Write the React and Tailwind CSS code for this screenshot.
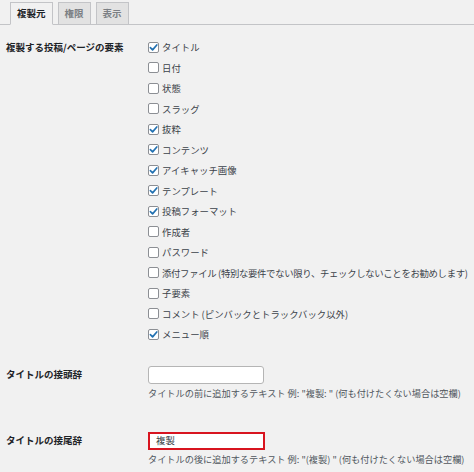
import React from 'react';

const FONT = { fontFamily: '"Noto Sans CJK JP", "Noto Sans", sans-serif' };

const ELEMENTS = [
  { label: 'タイトル', checked: true },
  { label: '日付', checked: false },
  { label: '状態', checked: false },
  { label: 'スラッグ', checked: false },
  { label: '抜粋', checked: true },
  { label: 'コンテンツ', checked: true },
  { label: 'アイキャッチ画像', checked: true },
  { label: 'テンプレート', checked: true },
  { label: '投稿フォーマット', checked: true },
  { label: '作成者', checked: false },
  { label: 'パスワード', checked: false },
  { label: '添付ファイル (特別な要件でない限り、チェックしないことをお勧めします)', checked: false, tight: true },
  { label: '子要素', checked: false },
  { label: 'コメント (ピンバックとトラックバック以外)', checked: false },
  { label: 'メニュー順', checked: true },
];

function Checkbox({ checked }) {
  return (
    <span className="relative flex h-[11px] w-[11px] shrink-0 items-center justify-center rounded-[2px] border border-[#8c8f94] bg-white">
      {checked && (
        <svg viewBox="0 0 12 12" className="absolute h-[11px] w-[11px]">
          <path d="M2.6 6.2 L5 8.6 L9.6 3.2" fill="none" stroke="#2271b1" strokeWidth="1.8" strokeLinecap="round" strokeLinejoin="round" />
        </svg>
      )}
    </span>
  );
}

function Tab({ label, active }) {
  return (
    <div
      className={`flex h-[23px] items-center border border-[#c3c4c7] px-[6px] text-[9.5px] font-bold ${
        active ? 'border-b-[#f1f1f1] bg-[#f1f1f1] text-[#1d2327]' : 'bg-[#e2e2e2] text-[#7b7f84]'
      }`}
    >
      {label}
    </div>
  );
}

export default function App() {
  return (
    <div className="h-[472px] w-[474px] overflow-hidden bg-[#f1f1f1] text-[#2c3338]" style={FONT}>
      {/* tabs */}
      <div className="flex h-[25px] items-end gap-[5px] border-b border-[#c3c4c7] pl-[10px]">
        <div className="-mb-px flex gap-[5px]">
          <Tab label="複製元" active />
          <Tab label="権限" />
          <Tab label="表示" />
        </div>
      </div>

      {/* elements to copy */}
      <div className="flex pt-[12px]">
        <div className="w-[148px] shrink-0 pl-[6px] pt-[4px] text-[9.5px] font-bold leading-[13px] text-[#1d2327]">
          複製する投稿/ページの要素
        </div>
        <div className="flex flex-col">
          {ELEMENTS.map(item => (
            <div key={item.label} className="flex h-[20.5px] items-center gap-[3px] whitespace-nowrap text-[9.4px] text-[#3c434a]">
              <Checkbox checked={item.checked} />
              <span className={item.tight ? 'tracking-[-0.33px]' : ''}>{item.label}</span>
            </div>
          ))}
        </div>
      </div>

      {/* title prefix */}
      <div className="flex pt-[21px]">
        <div className="flex h-[18px] w-[148px] shrink-0 items-center pl-[6px] text-[9.5px] font-bold text-[#1d2327]">
          タイトルの接頭辞
        </div>
        <div className="flex flex-col">
          <div className="h-[18px] w-[116px] rounded-[3px] border border-[#b5b5b5] bg-white" />
          <div className="mt-[1px] whitespace-nowrap text-[9.2px] leading-[16px] text-[#50575e]">
            タイトルの前に追加するテキスト 例: "複製: " (何も付けたくない場合は空欄)
          </div>
        </div>
      </div>

      {/* title suffix */}
      <div className="flex pt-[31px]">
        <div className="flex h-[18px] w-[148px] shrink-0 items-center pl-[6px] text-[9.5px] font-bold text-[#1d2327]">
          タイトルの接尾辞
        </div>
        <div className="flex flex-col">
          <div className="flex h-[18px] w-[117px] items-center border-2 border-[#d8141f] bg-white pl-[6px] text-[9.4px] text-[#2c3338]">
            複製
          </div>
          <div className="mt-[1px] whitespace-nowrap text-[9.2px] leading-[16px] text-[#50575e]">
            タイトルの後に追加するテキスト 例: "(複製) " (何も付けたくない場合は空欄)
          </div>
        </div>
      </div>
    </div>
  );
}
